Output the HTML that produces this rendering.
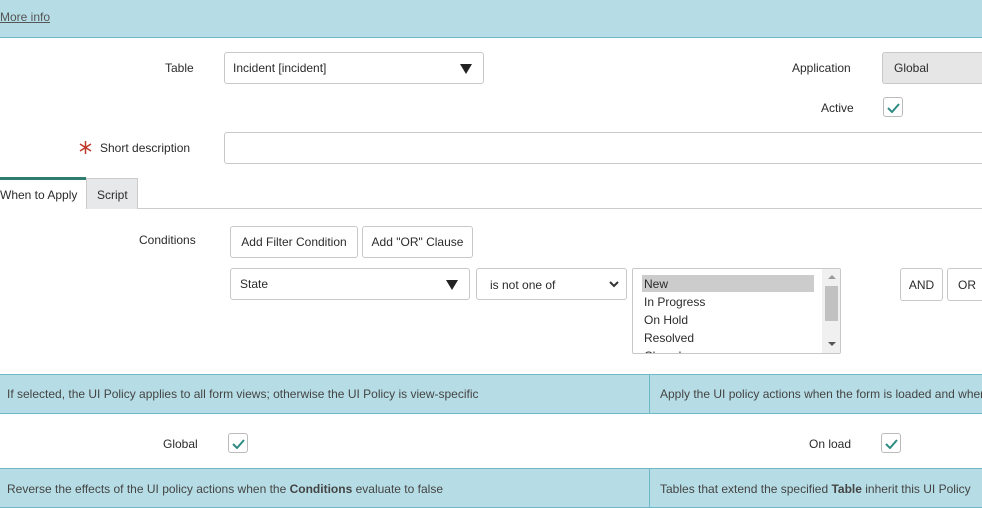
<!DOCTYPE html>
<html><head><meta charset="utf-8"><style>
*{box-sizing:border-box;margin:0;padding:0}
body{width:982px;height:500px;overflow:hidden;background:#fff;font-family:"Liberation Sans",sans-serif;font-size:12px;color:#2b2b2b;position:relative}
.a{position:absolute;white-space:nowrap}
.box{position:absolute;border:1px solid #c8c8c8;border-radius:3px;background:#fff}
.info{position:absolute;background:#b6dde5;border:1px solid #6eb8c8;color:#444;padding-left:8px;display:flex;align-items:center}
.cb{position:absolute;width:20px;height:20px;border:1px solid #bbb;border-radius:3px;background:#fff}
.cb svg{position:absolute;left:3px;top:4px}
.btn{position:absolute;border:1px solid #c8c8c8;border-radius:3px;background:#fff;display:flex;align-items:center;justify-content:center}
.tri{position:absolute;width:0;height:0;border-left:6px solid transparent;border-right:6px solid transparent;border-top:10px solid #222}
</style></head><body>
<div class="a" style="left:0;top:0;width:982px;height:38px;background:#b6dde5;border-bottom:1px solid #6eb8c8"></div>
<div class="a" style="left:0;top:10px;color:#555;text-decoration:underline">More info</div>

<div class="a" style="left:165px;top:61px">Table</div>
<div class="box" style="left:224px;top:52px;width:260px;height:32px"><span class="a" style="left:8px;top:8px">Incident [incident]</span><div class="tri" style="left:235px;top:11px"></div></div>
<div class="a" style="left:792px;top:61px">Application</div>
<div class="box" style="left:882px;top:52px;width:110px;height:32px;background:#e6e6e6"><span class="a" style="left:11px;top:8px">Global</span></div>
<div class="a" style="left:821px;top:101px">Active</div>
<div class="cb" style="left:883px;top:97px"><svg width="13" height="11" viewBox="0 0 13 11"><path d="M1 6l4 4 7-8" fill="none" stroke="#2e8b82" stroke-width="2"/></svg></div>

<svg class="a" style="left:79px;top:141px" width="13" height="13" viewBox="0 0 13 13"><path d="M6.5 0v13M1 3l11 7M12 3L1 10" stroke="#c0392b" stroke-width="1.5"/></svg>
<div class="a" style="left:100px;top:141px">Short description</div>
<div class="box" style="left:224px;top:132px;width:770px;height:32px"></div>

<div class="a" style="left:0;top:208px;width:982px;height:1px;background:#ccc"></div>
<div class="a" style="left:0;top:177px;width:86px;height:32px;border-top:3px solid #2e7d6f;background:#fff"></div>
<div class="a" style="left:0;top:188px">When to Apply</div>
<div class="a" style="left:86px;top:178px;width:52px;height:31px;background:#e6e8ea;border:1px solid #ccc;border-bottom:none"></div>
<div class="a" style="left:97px;top:188px">Script</div>

<div class="a" style="left:139px;top:233px">Conditions</div>
<div class="btn" style="left:230px;top:226px;width:128px;height:32px">Add Filter Condition</div>
<div class="btn" style="left:362px;top:226px;width:111px;height:32px">Add "OR" Clause</div>
<div class="box" style="left:230px;top:268px;width:240px;height:32px"><span class="a" style="left:9px;top:8px">State</span><div class="tri" style="left:215px;top:11px"></div></div>
<div class="box" style="left:476px;top:268px;width:151px;height:32px"><span class="a" style="left:13px;top:9px">is not one of</span><svg class="a" style="left:132px;top:11px" width="10" height="8" viewBox="0 0 10 8"><path d="M1 2l4 4 4-4" fill="none" stroke="#333" stroke-width="2"/></svg></div>
<div class="box" style="left:632px;top:268px;width:209px;height:86px;border-radius:2px;overflow:hidden">
<div class="a" style="left:9px;top:6px;width:172px;height:17px;background:#ccc"></div>
<div class="a" style="left:11px;top:8px">New</div>
<div class="a" style="left:11px;top:26px">In Progress</div>
<div class="a" style="left:11px;top:44px">On Hold</div>
<div class="a" style="left:11px;top:62px">Resolved</div>
<div class="a" style="left:11px;top:80px">Closed</div>
<div class="a" style="left:189px;top:0;width:19px;height:86px;background:#f0f0f0"></div>
<div class="a" style="left:192px;top:17px;width:13px;height:35px;background:#c1c1c1"></div>
<div class="a" style="left:195px;top:6px;border-left:4px solid transparent;border-right:4px solid transparent;border-bottom:4px solid #999"></div>
<div class="a" style="left:195px;top:73px;border-left:4px solid transparent;border-right:4px solid transparent;border-top:4px solid #555"></div>
</div>
<div class="btn" style="left:900px;top:268px;width:43px;height:33px">AND</div>
<div class="btn" style="left:947px;top:268px;width:45px;height:33px;justify-content:flex-start;padding-left:10px">OR</div>

<div class="info" style="left:-2px;top:374px;width:652px;height:40px">If selected, the UI Policy applies to all form views; otherwise the UI Policy is view-specific</div>
<div class="info" style="left:649px;top:374px;width:340px;height:40px;padding-left:10px">Apply the UI policy actions when the form is loaded and when</div>
<div class="a" style="left:163px;top:437px">Global</div>
<div class="cb" style="left:228px;top:433px"><svg width="13" height="11" viewBox="0 0 13 11"><path d="M1 6l4 4 7-8" fill="none" stroke="#2e8b82" stroke-width="2"/></svg></div>
<div class="a" style="left:809px;top:437px">On load</div>
<div class="cb" style="left:881px;top:433px"><svg width="13" height="11" viewBox="0 0 13 11"><path d="M1 6l4 4 7-8" fill="none" stroke="#2e8b82" stroke-width="2"/></svg></div>
<div class="info" style="left:-2px;top:468px;width:652px;height:40px;align-items:flex-start;padding-top:13px">Reverse the effects of the UI policy actions when the&nbsp;<b>Conditions</b>&nbsp;evaluate to false</div>
<div class="info" style="left:649px;top:468px;width:340px;height:40px;padding-left:10px;align-items:flex-start;padding-top:13px">Tables that extend the specified&nbsp;<b>Table</b>&nbsp;inherit this UI Policy</div>
</body></html>
